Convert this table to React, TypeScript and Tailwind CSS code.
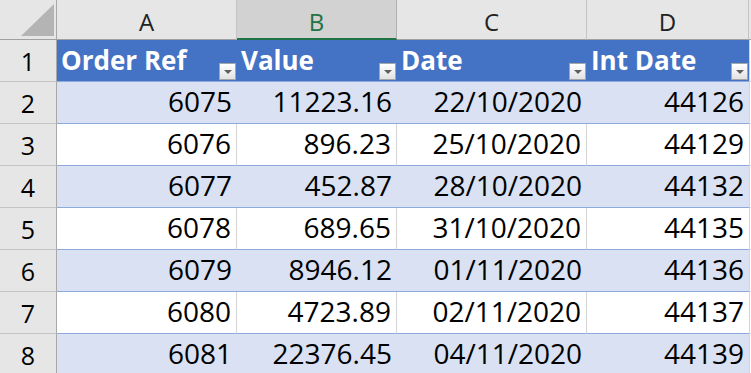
const rows = [
  { n: 2, cells: ["6075", "11223.16", "22/10/2020", "44126"] },
  { n: 3, cells: ["6076", "896.23", "25/10/2020", "44129"] },
  { n: 4, cells: ["6077", "452.87", "28/10/2020", "44132"] },
  { n: 5, cells: ["6078", "689.65", "31/10/2020", "44135"] },
  { n: 6, cells: ["6079", "8946.12", "01/11/2020", "44136"] },
  { n: 7, cells: ["6080", "4723.89", "02/11/2020", "44137"] },
  { n: 8, cells: ["6081", "22376.45", "04/11/2020", "44139"] },
];

const widths = ["w-[180px]", "w-[160px]", "w-[190px]", "w-[162px]"];
const headers = ["Order Ref", "Value", "Date", "Int Date"];

function FilterButton() {
  return (
    <span className="absolute right-[1px] bottom-[1px] flex h-[17px] w-[17px] items-center justify-center border border-[#a6a6a6] bg-linear-to-b from-white to-[#e2e2e2]">
      <span className="mt-[1px] h-0 w-0 border-x-[4px] border-t-[4px] border-x-transparent border-t-[#5f5f5f]" />
    </span>
  );
}

export default function App() {
  return (
    <div className="h-[373px] w-[751px] overflow-hidden bg-white font-['Open_Sans',sans-serif] text-black">
      {/* column letters */}
      <div className="flex h-[40px]">
        <div className="relative w-[57px] shrink-0 border-r border-b border-r-[#a8a8a8] border-b-[#a0a0a0] bg-[#e6e6e6]">
          <svg className="absolute left-[21px] top-[4px]" width="33" height="32" viewBox="0 0 33 32">
            <polygon points="33,0 33,32 0,32" fill="#b4b4b4" />
          </svg>
        </div>
        <div className="w-[180px] shrink-0 border-r border-b border-r-[#c4c4c4] border-b-[#a0a0a0] bg-[#e6e6e6] pt-[10px] text-center text-[24px] leading-none text-[#222]">
          A
        </div>
        <div className="w-[160px] shrink-0 border-r border-b-2 border-r-[#b0b0b0] border-b-[#217346] bg-[#d2d2d2] pt-[10px] text-center text-[24px] leading-none text-[#217346]">
          B
        </div>
        <div className="w-[190px] shrink-0 border-r border-b border-r-[#c4c4c4] border-b-[#a0a0a0] bg-[#e6e6e6] pt-[10px] text-center text-[24px] leading-none text-[#222]">
          C
        </div>
        <div className="w-[162px] shrink-0 border-r border-b border-r-[#c4c4c4] border-b-[#a0a0a0] bg-[#e6e6e6] pt-[10px] text-center text-[24px] leading-none text-[#222]">
          D
        </div>
        <div className="flex-1 border-b border-b-[#a0a0a0] bg-[#e6e6e6]" />
      </div>

      {/* table header row */}
      <div className="flex h-[42px]">
        <div className="w-[57px] shrink-0 border-r border-b border-r-[#a8a8a8] border-b-[#c4c4c4] bg-[#e6e6e6] pt-[9px] text-center text-[25px] leading-none">
          1
        </div>
        {headers.map((h, i) => (
          <div
            key={h}
            className={`${widths[i]} relative shrink-0 border-b border-b-[#8ea9db] bg-[#4472c4] pt-[7px] pl-[4px] text-[26px] leading-none font-bold text-white`}
          >
            {h}
            <FilterButton />
          </div>
        ))}
        <div className="flex-1 border-b border-l border-b-[#d4d4d4] border-l-[#d4d4d4]" />
      </div>

      {rows.map((r, idx) => {
        const banded = idx % 2 === 0;
        return (
          <div key={r.n} className="flex h-[42px]">
            <div className="w-[57px] shrink-0 border-r border-b border-r-[#a8a8a8] border-b-[#c4c4c4] bg-[#e6e6e6] pt-[9px] text-center text-[25px] leading-none">
              {r.n}
            </div>
            {r.cells.map((c, i) => (
              <div
                key={i}
                className={`${widths[i]} shrink-0 border-b border-b-[#8ea9db] pt-[5px] pr-[5px] text-right text-[28px] leading-none ${
                  banded
                    ? "bg-[#d9e1f2]"
                    : i < 3
                      ? "border-r border-r-[#d4d4d4] bg-white"
                      : "bg-white"
                }`}
              >
                {c}
              </div>
            ))}
            <div className="flex-1 border-b border-l border-b-[#d4d4d4] border-l-[#d4d4d4]" />
          </div>
        );
      })}
    </div>
  );
}
